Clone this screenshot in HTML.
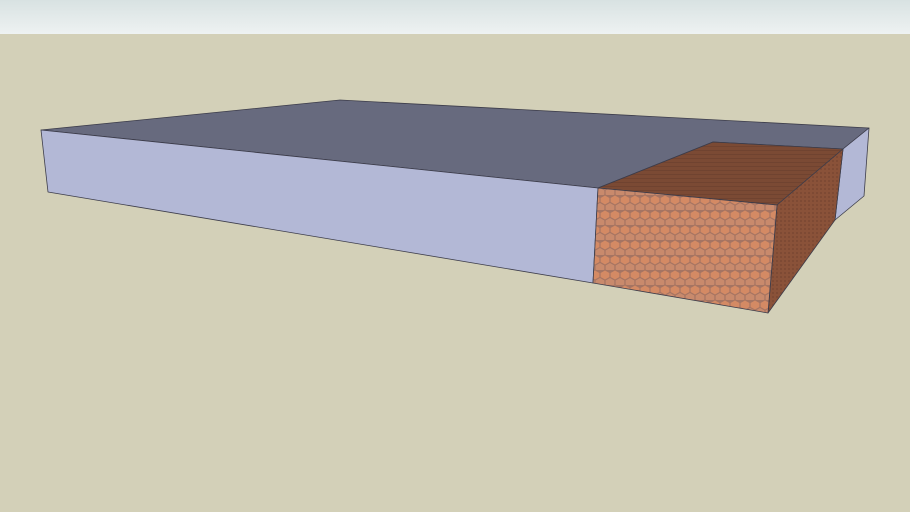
<!DOCTYPE html>
<html><head><meta charset="utf-8"><style>
html,body{margin:0;padding:0;width:910px;height:512px;overflow:hidden;background:#d3d0b8}
</style></head><body>
<svg width="910" height="512" viewBox="0 0 910 512" xmlns="http://www.w3.org/2000/svg">
<defs>
<linearGradient id="sky" x1="0" y1="0" x2="0" y2="1">
<stop offset="0" stop-color="#d8e2e2"/><stop offset="1" stop-color="#eef2f2"/></linearGradient>
<pattern id="hex" width="10" height="15" patternUnits="userSpaceOnUse">
<rect width="10" height="15" fill="#a57462"/>
<polygon points="5,0.5 9.4,3 9.4,7 5,9.5 0.6,7 0.6,3" fill="#d48a64"/>
<polygon points="0,8 4.4,10.5 4.4,14.5 0,17 -4.4,14.5 -4.4,10.5" fill="#c98a6c"/>
<polygon points="10,8 14.4,10.5 14.4,14.5 10,17 5.6,14.5 5.6,10.5" fill="#c98a6c"/>
</pattern>
<pattern id="wood" width="6" height="4" patternUnits="userSpaceOnUse">
<rect width="6" height="4" fill="#7b4a34"/><rect y="2" width="6" height="1" fill="#704330"/>
</pattern>
<pattern id="side" width="4" height="4" patternUnits="userSpaceOnUse">
<rect width="4" height="4" fill="#8a5239"/><rect width="2" height="2" fill="#7e4a34"/>
</pattern>
</defs>
<rect width="910" height="34" fill="url(#sky)"/>
<g stroke="#3c3c4a" stroke-width="0.8" stroke-linejoin="round">
<polygon points="41,130 340,100 869,128 843,149 713,142 598,188" fill="#676a7e"/>
<polygon points="41,130 598,188 593,283 48,192" fill="#b3b8d6"/>
<polygon points="843,149 869,128 864,196 835,220" fill="#b3b8d6"/>
<polygon points="598,188 713,142 843,149 777,205" fill="url(#wood)"/>
<polygon points="777,205 843,149 835,220 768,313" fill="url(#side)"/>
<polygon points="598,188 777,205 768,313 593,283" fill="url(#hex)"/>
</g>
</svg>
</body></html>
